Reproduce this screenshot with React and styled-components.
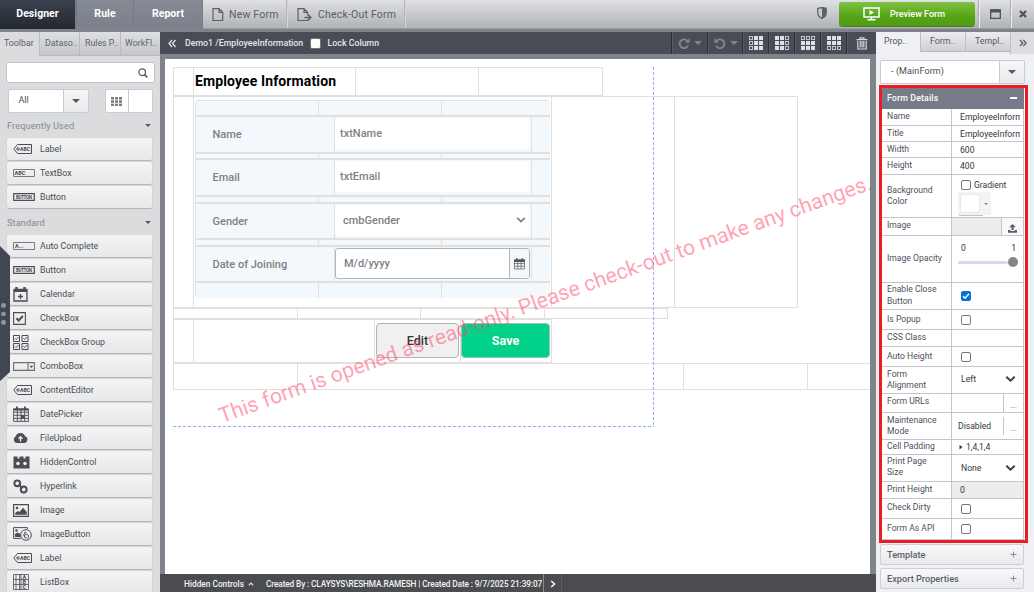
import React from "react";
import styled, { createGlobalStyle, css } from "styled-components";

const GlobalStyle = createGlobalStyle`
  * { box-sizing: border-box; }
  html, body { margin: 0; padding: 0; }
  body {
    width: 1034px;
    height: 592px;
    overflow: hidden;
    background: #7f838b;
    font-family: Roboto, "Liberation Sans", sans-serif;
    font-size: 9px;
    color: #4a4d55;
  }
`;

const line = "#e0e0e0";

/* ---------- page shell ---------- */

const Page = styled.div`
  position: relative;
  display: flex;
  flex-direction: column;
  gap: 3px;
  width: 1034px;
  height: 592px;
  overflow: hidden;
`;

const Header = styled.header`
  display: flex;
  flex: none;
  height: 29px;
  background: linear-gradient(#e0e1e4, #b1b2b6);
  border-bottom: 1px solid #9a9ca1;
`;

const MainTab = styled.div`
  width: ${(p) => p.$w}px;
  height: 29px;
  line-height: 28px;
  text-align: center;
  color: #fff;
  font-size: 10.5px;
  font-weight: 700;
  letter-spacing: 0.05px;
  border-right: ${(p) => (p.$active ? 2 : 1)}px solid #777a84;
  background: ${(p) =>
    p.$active ? "linear-gradient(#3b424e, #232830)" : "linear-gradient(#868a95, #7c808b)"};
`;

const HeaderAction = styled.div`
  display: flex;
  align-items: center;
  gap: ${(p) => p.$gap}px;
  width: ${(p) => p.$w}px;
  height: 28px;
  padding: 1px 0 0 9px;
  border-right: 1px solid #d5d6d9;
  box-shadow: inset -1px 0 #b3b4b8;
  color: #5a5d65;
  font-size: 10.5px;
  letter-spacing: 0.2px;
  white-space: nowrap;
`;

const HeaderRight = styled.div`
  display: flex;
  margin-left: auto;
  align-items: flex-start;
`;

const Shield = styled.div`
  padding: 7px 12px 0 0;
  svg { display: block; }
`;

const PreviewButton = styled.div`
  display: flex;
  align-items: center;
  gap: 10px;
  width: 136px;
  height: 24px;
  margin: 2px 4px 0 0;
  padding-left: 24px;
  border-radius: 3px;
  background: linear-gradient(#80c142, #55a516 60%, #4f9c14);
  box-shadow: 0 1px 0 #4d7c25;
  color: #fff;
  font-size: 9px;
  font-weight: 500;
  line-height: 22px;
`;

const WindowButton = styled.div`
  display: flex;
  align-items: center;
  justify-content: center;
  width: ${(p) => p.$w}px;
  height: 28px;
  border-left: 1px solid #f0f0f1;
  box-shadow: -1px 0 #a9abaf;
`;

const Body = styled.div`
  display: flex;
  flex: 1;
  min-height: 0;
`;

/* ---------- left toolbox ---------- */

const LeftPanel = styled.aside`
  flex: none;
  width: 160px;
  background: #dbdcde;
  overflow: hidden;
`;

const Tabs = styled.div`
  display: flex;
  height: ${(p) => p.$h}px;
`;

const LeftTab = styled.div`
  width: ${(p) => p.$w}px;
  padding-left: ${(p) => p.$pad}px;
  line-height: 22px;
  white-space: nowrap;
  overflow: hidden;
  font-size: 8.8px;
  color: #5e626b;
  ${(p) =>
    !p.$active &&
    css`
      border-left: 1px solid #b9bbbf;
      border-bottom: 1px solid #b9bbbf;
      background: linear-gradient(#dfe0e2, #c3c5c8);
    `}
`;

const SearchBox = styled.div`
  display: flex;
  align-items: center;
  justify-content: flex-end;
  width: 149px;
  height: 21px;
  margin: 6px 0 6px 5.5px;
  padding-right: 6px;
  border: 1px solid #bfc2c8;
  border-radius: 2px;
  background: #fff;
`;

const Filters = styled.div`
  display: flex;
  height: 24px;
  padding-left: 7.5px;
`;

const Select = styled.div`
  display: flex;
  width: ${(p) => p.$w}px;
  height: 24px;
  border: 1px solid #c9ccd6;
  border-radius: 2px;
  background: #fff;
  line-height: 21px;
`;

const SelectText = styled.div`
  flex: 1;
  padding-left: ${(p) => p.$pad}px;
  letter-spacing: ${(p) => p.$ls || 0}px;
`;

const SelectArrow = styled.div`
  display: flex;
  align-items: center;
  justify-content: center;
  width: 25px;
  border-left: 1px solid #c9ccd6;
  background: linear-gradient(#f6f6f7, #e9eaec);
`;

const Caret = styled.i`
  width: 0;
  height: 0;
  border: ${(p) => p.$s || 4}px solid transparent;
  border-top-color: ${(p) => p.$c || "#555962"};
  border-bottom: 0;
`;

const ViewToggle = styled.div`
  display: flex;
  width: 48px;
  height: 24px;
  margin-left: 16px;
  border: 1px solid #c9ccd6;
  border-radius: 2px;
  background: #fff;
`;

const ViewCell = styled.div`
  display: flex;
  align-items: center;
  justify-content: center;
  flex: 1;
  & + & { border-left: 1px solid #c9ccd6; }
`;

const GroupTitle = styled.div`
  display: flex;
  align-items: center;
  justify-content: space-between;
  height: 25px;
  padding: 0 9px 0 7px;
  color: #868991;
  font-size: 9.2px;
  letter-spacing: 0.1px;
`;

const ToolItem = styled.div`
  display: flex;
  align-items: center;
  width: 145px;
  height: 22px;
  margin: 0 0 2px 7px;
  padding-left: 6px;
  border-radius: 2px;
  background: linear-gradient(#f4f4f4, #e7e8e9);
  box-shadow: 0 1px 1px #b2b4b7, 0 0 1px #bbb;
  color: #4a4d54;
  line-height: 24px;
  font-size: 8.8px;
  svg { flex: none; display: block; }
`;

const ToolIcon = styled.div`
  width: 27px;
`;

const SideHandle = styled.div`
  position: absolute;
  left: 0;
  top: 246px;
  display: flex;
  flex-direction: column;
  align-items: flex-start;
  justify-content: center;
  gap: 3.4px;
  width: 10px;
  height: 135px;
  padding: 1px 0 0 1px;
  background: #414752;
  clip-path: polygon(0 0, 10px 10px, 10px 126px, 0 135px);
`;

const Dot = styled.i`
  width: 4.8px;
  height: 4.8px;
  border-radius: 50%;
  background: #9197a1;
`;

/* ---------- centre ---------- */

const Center = styled.main`
  display: flex;
  flex-direction: column;
  width: 716px;
`;

const FormBar = styled.div`
  display: flex;
  align-items: center;
  flex: none;
  height: 22px;
  padding-left: 8px;
  background: #484c55;
  color: #e4e5e8;
  font-size: 8.8px;
  font-weight: 500;
  line-height: 20px;
  white-space: nowrap;
`;

const FormPath = styled.span`
  width: 124px;
  padding-left: 8px;
  margin-right: 9px;
  letter-spacing: 0;
`;

const FormBarTools = styled.div`
  display: flex;
  height: 22px;
  margin-left: auto;
`;

const BarTool = styled.div`
  display: flex;
  align-items: center;
  justify-content: center;
  gap: 3px;
  width: ${(p) => p.$w}px;
  border-left: 1px solid #2b2f36;
  box-shadow: inset 1px 0 #565a63;
`;

const Canvas = styled.div`
  position: relative;
  flex: none;
  width: 705px;
  height: 515px;
  margin: 5px 0 0 5px;
  padding: 8px 0 0 8px;
  overflow: hidden;
  background: #fff;
`;

const GridRow = styled.div`
  display: flex;
  width: ${(p) => p.$w}px;
  height: ${(p) => p.$h}px;
  border: 1px solid ${line};
  border-right-width: ${(p) => (p.$open ? 0 : 1)}px;
`;

const GridCell = styled.div`
  flex: ${(p) => (p.$w ? "none" : 1)};
  width: ${(p) => p.$w}px;
  min-width: 0;
  & + & { border-left: 1px solid ${line}; }
`;

const FormTitle = styled.div`
  padding-left: 1px;
  color: #000;
  font-size: 14px;
  font-weight: 700;
  line-height: 26px;
  letter-spacing: 0.12px;
  white-space: nowrap;
`;

const FormPanel = styled.div`
  width: 355px;
  height: 198px;
  margin: 3px 0 0 1px;
  border-radius: 4px;
  overflow: hidden;
  background: #f2f8fb;
`;

const PanelRow = styled.div`
  display: flex;
  height: ${(p) => p.$h}px;
  border: 1px solid ${line};
  border-right: 0;
  border-bottom-width: ${(p) => (p.$last ? 0 : 1)}px;
`;

const FieldLabel = styled.div`
  padding: 0 0 0 16.5px;
  color: #827f86;
  font-size: 11px;
  font-weight: 500;
  line-height: 36px;
  letter-spacing: ${(p) => p.$ls || 0}px;
`;

const Field = styled.div`
  display: flex;
  align-items: center;
  justify-content: space-between;
  width: 195px;
  height: 31px;
  margin-top: 1px;
  padding: 0 4px 1px ${(p) => p.$pad || 5}px;
  border-radius: 3px;
  background: #fff;
  color: #827f86;
  font-size: 11px;
  font-weight: 500;
`;

const DateField = styled(Field)`
  padding: 0 0 0 8px;
  border: 1px solid #b4b4b4;
`;

const DateButton = styled.div`
  display: flex;
  align-items: center;
  justify-content: center;
  width: 20px;
  height: 29px;
  border-left: 1px solid #b4b4b4;
  border-radius: 0 2px 2px 0;
  background: #f2f8fb;
`;

const FormButton = styled.div`
  width: ${(p) => p.$w}px;
  height: 35px;
  margin: 3px 0 0 ${(p) => p.$ml}px;
  border: 1px solid ${(p) => (p.$primary ? "#9fc4b4" : "#b4b4b4")};
  border-radius: 4px;
  background: ${(p) => (p.$primary ? "#02d189" : "#f0f0f0")};
  color: ${(p) => (p.$primary ? "#fff" : "#333")};
  font-size: 12.5px;
  font-weight: ${(p) => (p.$primary ? 700 : 500)};
  line-height: 34px;
  text-align: center;
`;

const FormBounds = styled.div`
  position: absolute;
  left: 8px;
  top: 8px;
  width: 481px;
  height: 360px;
  background:
    repeating-linear-gradient(90deg, #8db2f5 0 3px, transparent 3px 5px) 0 100% / 100% 1px no-repeat,
    repeating-linear-gradient(#8db2f5 0 3px, transparent 3px 5px) 100% 0 / 1px 100% no-repeat;
`;

const Watermark = styled.div`
  position: absolute;
  left: 58px;
  top: 343px;
  color: rgba(255, 70, 105, 0.5);
  font-size: 21.3px;
  line-height: 28px;
  white-space: nowrap;
  transform-origin: 0 24px;
  transform: rotate(-19.8deg);
`;

const Footer = styled.footer`
  display: flex;
  flex: 1;
  align-items: stretch;
  padding-left: 24px;
  background: #4b4c50;
  color: #f3f3f3;
  font-size: 8.3px;
  font-weight: 500;
  line-height: 19px;
  white-space: nowrap;
`;

const HiddenControls = styled.div`
  display: flex;
  align-items: center;
  gap: 4px;
  width: 82px;
`;

const CreatedBy = styled.div`
  width: 278px;
  line-height: 20px;
  letter-spacing: -0.13px;
  border-right: 1px solid #8a8b8f;
`;

const FooterNext = styled.div`
  display: flex;
  align-items: center;
  justify-content: center;
  width: 18px;
  border-right: 1px solid #5b5c60;
`;

/* ---------- right properties ---------- */

const RightPanel = styled.aside`
  width: 158px;
  background: #eff0f4;
  overflow: hidden;
`;

const RightTab = styled.div`
  width: ${(p) => p.$w}px;
  height: ${(p) => (p.$active ? 21 : 20)}px;
  padding-left: ${(p) => p.$pad}px;
  color: #555860;
  font-size: 8.8px;
  line-height: 18px;
  ${(p) =>
    !p.$active &&
    css`
      border-left: 1px solid #bdbfc4;
      border-bottom: 1px solid #b3b5ba;
      background: linear-gradient(#ececee, #cfd0d4);
    `}
`;

const MoreTabs = styled.div`
  display: flex;
  align-items: center;
  justify-content: center;
  width: 24px;
  height: 22px;
  background: #dcdde0;
  border-left: 1px solid #bdbfc4;
`;

const FormSelectWrap = styled.div`
  padding: 6px 0 0 4px;
`;

const Highlight = styled.section`
  width: 149px;
  height: 458px;
  margin: 1px 0 0 3px;
  border: 3px solid #ec1c24;
  background: #fff;
`;

const DetailsHeader = styled.div`
  display: flex;
  align-items: center;
  justify-content: space-between;
  height: 21px;
  width: 142px;
  padding: 0 7px 1px 5px;
  background: #757b88;
  color: #fff;
  font-size: 8.8px;
  font-weight: 500;
  letter-spacing: 0.12px;
`;

const MinusMark = styled.i`
  width: 7px;
  height: 2px;
  background: #fff;
`;

const PropRow = styled.div`
  display: flex;
  width: 142px;
  height: ${(p) => p.$h}px;
  border-bottom: 1px solid #c3c6ce;
  border-right: 1px solid #c3c6ce;
`;

const PropName = styled.div`
  display: flex;
  align-items: center;
  width: 69px;
  padding: 0 8px ${(p) => p.$up || 0}px 5px;
  color: #4d515a;
  font-size: 8.6px;
  line-height: 11.3px;
`;

const PropValue = styled.div`
  display: flex;
  position: relative;
  align-items: center;
  flex: 1;
  min-width: 0;
  padding-left: ${(p) => (p.$pad == null ? 8 : p.$pad)}px;
  padding-bottom: ${(p) => p.$up || 0}px;
  border-left: 1px solid #c3c6ce;
  background: ${(p) => (p.$grey ? "#ececec" : "#fff")};
  color: #33363d;
  font-size: 8.6px;
  white-space: nowrap;
  overflow: hidden;
`;

const Clip = styled.span`
  width: 60px;
  overflow: hidden;
`;

const Box = styled.span`
  display: flex;
  align-items: center;
  justify-content: center;
  flex: none;
  width: ${(p) => p.$s || 10}px;
  height: ${(p) => p.$s || 10}px;
  border: 1px solid ${(p) => (p.$on ? "#0a6fd0" : "#767676")};
  border-radius: 2px;
  background: ${(p) => (p.$on ? "#0a74d6" : "#fff")};
`;

const Between = styled.div`
  display: flex;
  align-items: center;
  justify-content: space-between;
  flex: 1;
  padding-right: ${(p) => p.$r}px;
`;

const Stack = styled.div`
  display: flex;
  flex-direction: column;
  flex: 1;
  align-self: stretch;
`;

const GradientLine = styled.div`
  display: flex;
  align-items: center;
  gap: 3px;
  height: 17px;
  padding: 2px 0 0 1px;
`;

const Swatch = styled.div`
  display: flex;
  align-items: center;
  justify-content: space-between;
  width: 33px;
  height: 23px;
  margin-left: -2px;
  padding: 0 3px 0 2px;
  background: #f3f3f3;
`;

const SwatchColor = styled.div`
  width: 20px;
  height: 19px;
  border: 1px solid #e8e8e8;
  border-radius: 2px;
  background: #fff;
`;

const SwatchEdge = styled.div`
  width: 24px;
  height: 1px;
  margin-left: -1px;
  background: #bfc2d0;
`;

const SideButton = styled.div`
  display: flex;
  align-items: center;
  justify-content: center;
  width: ${(p) => p.$w}px;
  height: ${(p) => (p.$h ? p.$h + "px" : "100%")};
  margin-left: auto;
  border-left: 1px solid #c3c6ce;
  background: ${(p) => p.$bg || "#fff"};
  color: #77666a;
  line-height: ${(p) => (p.$h ? 17 : 18)}px;
  padding-top: 4px;
`;

const Scale = styled.div`
  display: flex;
  justify-content: space-between;
  padding: 7px 7px 0 1px;
`;

const Slider = styled.div`
  display: flex;
  align-items: center;
  margin: 4px 5px 0 -2px;
`;

const SliderTrack = styled.i`
  flex: 1;
  height: 3px;
  border-radius: 2px;
  background: #d4daee;
`;

const SliderThumb = styled.i`
  width: 10px;
  height: 10px;
  border-radius: 50%;
  background: #858585;
`;

const Accordion = styled.div`
  display: flex;
  align-items: center;
  justify-content: space-between;
  width: 144px;
  height: 21px;
  margin: 1px 0 3px 4px;
  padding: 0 6px 1px 6px;
  border: 1px solid #ccd0d8;
  border-radius: 2px;
  background: linear-gradient(#f8f8f9, #e9eaec);
  color: #5b5f68;
  font-size: 9.2px;
  font-weight: 500;
`;

/* ---------- icons ---------- */

const ink = "#4a4d54";

const Icon = ({ w, h, children, ...rest }) => (
  <svg width={w} height={h} viewBox={`0 0 ${w} ${h}`} fill="none" stroke={ink} {...rest}>
    {children}
  </svg>
);

const iconText = { fill: ink, stroke: "none", fontFamily: "Roboto, sans-serif", fontWeight: 700 };

const icons = {
  tag: (
    <Icon w={20} h={10}>
      <path d="M4.5 .5H18.500V9.500H4.500L.8 5Z" />
      <circle cx="5" cy="5" r="1.200" />
      <text x="7" y="7" fontSize="5.200" {...iconText}>ABC</text>
    </Icon>
  ),
  textbox: (
    <Icon w={22} h={8}>
      <path d="M.5 .5H21.500V7.500H.5Z" stroke="#777a80" />
      <text x="1.500" y="6" fontSize="5.500" {...iconText}>ABC</text>
    </Icon>
  ),
  button: (
    <Icon w={22} h={8}>
      <path d="M.7 .7H21.300V7.300H.7Z" strokeWidth="1.200" />
      <text x="3" y="5.800" fontSize="4.600" textLength="16" {...iconText}>BUTTON</text>
    </Icon>
  ),
  auto: (
    <Icon w={22} h={8}>
      <path d="M.5 .5H21.500V7.500H.5Z" stroke="#777a80" />
      <text x="2" y="6" fontSize="5.500" {...iconText}>A...</text>
    </Icon>
  ),
  calendar: (
    <Icon w={15} h={16}>
      <path d="M1 3.500H14V15H1Z" strokeWidth="1.300" />
      <path d="M1 3H14V6H1Z" fill={ink} stroke="none" />
      <path d="M3.500 1V4.500M11.500 1V4.500" strokeWidth="2.400" />
      <path d="M7.500 8V13M5 10.500H10" strokeWidth="1.300" />
    </Icon>
  ),
  check: (
    <Icon w={13} h={13}>
      <path d="M.6 .6H12.400V12.400H.6Z" strokeWidth="1.100" />
      <path d="M3.400 6.300L5.700 8.600L9.800 4" strokeWidth="2" />
    </Icon>
  ),
  checks: (
    <Icon w={16} h={15}>
      {[0, 8.5].map((x) =>
        [0, 8].map((y) => (
          <g key={`${x}-${y}`} transform={`translate(${x} ${y})`}>
            <path d="M.5 .5H6.500V6.500H.5Z" />
            <path d="M2 3.300L3.200 4.500L5.400 2.200" />
          </g>
        ))
      )}
    </Icon>
  ),
  combo: (
    <Icon w={22} h={9}>
      <path d="M.6 .6H21.400V8.400H.6ZM15 1V8" strokeWidth="1.100" stroke="#6a6d73" />
      <path d="M16.500 3.700H20.300L18.400 6Z" fill={ink} stroke="none" />
    </Icon>
  ),
  datepicker: (
    <Icon w={16} h={16}>
      <path d="M.6 3H15.400V15.400H.6ZM.6 6.200H15.400M.6 9.300H15.400M.6 12.400H15.400M4.300 3V15.400M8 3V15.400M11.700 3V15.400" strokeWidth=".9" />
      <path d="M.5 2.500H15.500V4.500H.5ZM8 9.300H11.700V12.400H8ZM3 .5H4.800V4H3ZM11 .5H12.800V4H11Z" fill={ink} stroke="none" />
    </Icon>
  ),
  upload: (
    <Icon w={15} h={12}>
      <path d="M3.800 11A3.500 3.500 0 0 1 2.600 4.500A5 5 0 0 1 12 4.200A3.500 3.500 0 0 1 11.500 11Z" fill={ink} stroke="none" />
      <path d="M7.500 9.500V5M5.500 6.700L7.500 4.700L9.500 6.700" stroke="#efefef" strokeWidth="1.300" />
    </Icon>
  ),
  hidden: (
    <Icon w={17} h={13}>
      <path d="M.5 .5H4.500V2.500H6.500V.5H10.500V2.500H12.500V.5H16.500V12.500H.5Z" fill={ink} stroke="none" />
      <circle cx="5" cy="7.500" r="1.800" fill="#eee" stroke="none" />
      <circle cx="12" cy="7.500" r="1.800" fill="#eee" stroke="none" />
    </Icon>
  ),
  link: (
    <Icon w={15} h={15}>
      <circle cx="4.300" cy="4.300" r="2.900" strokeWidth="2" />
      <circle cx="10.700" cy="10.500" r="2.900" strokeWidth="2" />
      <path d="M5.500 5.400L9.500 9.400" strokeWidth="1.800" />
    </Icon>
  ),
  image: (
    <Icon w={16} h={13}>
      <path d="M.6 .6H15.400V12.400H.6Z" strokeWidth="1.200" />
      <circle cx="4" cy="4" r="1.300" fill={ink} stroke="none" />
      <path d="M2.200 10.800V9L5 7L6.500 8L10 3.800L13.800 8V10.800Z" fill={ink} stroke="none" />
    </Icon>
  ),
  imageButton: (
    <Icon w={20} h={14}>
      <path d="M8 11.400H.6V.6H14.400V2" />
      <circle cx="3.500" cy="3.500" r="1.200" fill={ink} stroke="none" />
      <path d="M2 10V7L4.500 5.500L7.500 7V10Z" fill={ink} stroke="none" />
      <circle cx="13" cy="8" r="5.300" fill="#efefef" />
      <path d="M11 8.500L10.500 7.500L11.700 9.800V5.200H12.800V7.500L15.500 8V10L14.800 11H12Z" strokeWidth=".8" />
    </Icon>
  ),
  listbox: (
    <Icon w={16} h={16}>
      <path d="M.5 .5H15.500V15.500H.5ZM6.500 .5V15.500M8 .5V15.500M.5 5.500H15.500M.5 10.500H15.500M3 .5V15.500" strokeWidth=".8" />
      <text x="9.400" y="5.200" fontSize="5.500" {...iconText}>A</text>
      <text x="9.400" y="10.200" fontSize="5.500" {...iconText}>B</text>
      <text x="9.400" y="15.200" fontSize="5.500" {...iconText}>C</text>
    </Icon>
  ),
};

const PageIcon = ({ arrow }) => (
  <Icon w={arrow ? 16 : 12} h={14} stroke="#5d6068">
    <path d="M7 .7H1V12.500H10.700V4.300L7 .7V4.300H10.700" strokeWidth="1.200" />
    {arrow && (
      <>
        <path d="M8 9.500H14" stroke="#c6c7ca" strokeWidth="4.500" />
        <path d="M7.500 9.500H13M11 6.700L13.800 9.500L11 12.300" strokeWidth="1.600" />
      </>
    )}
  </Icon>
);

/* 3x3 layout glyph; `hollow` tells which squares are only outlined */
const GridGlyph = ({ hollow }) => (
  <svg width="14" height="14" viewBox="0 0 14 14">
    {[0, 1, 2].map((r) =>
      [0, 1, 2].map((c) => {
        const open = hollow(r, c);
        return (
          <rect
            key={`${r}${c}`}
            x={c * 5 + (open ? 0.5 : 0)}
            y={r * 5 + (open ? 0.5 : 0)}
            width={open ? 3 : 4}
            height={open ? 3 : 4}
            fill={open ? "none" : "#dfe0e3"}
            stroke={open ? "#c3c5ca" : "none"}
          />
        );
      })
    )}
  </svg>
);

const Turn = ({ flip }) => (
  <svg width="14" height="14" viewBox="0 0 14 14" fill="none" stroke="#82858b" strokeWidth="1.900">
    <g transform={flip ? "matrix(-1 0 0 1 14 0)" : undefined}>
      <path d="M10.500 5A4.400 4.400 0 1 0 11 9.700" />
      <path d="M12.600 2V6.700H7.900Z" fill="#82858b" stroke="none" />
    </g>
  </svg>
);

const Chevron = ({ color = "#3d3f45", w = 11 }) => (
  <svg width={w} height="8" viewBox="0 0 11 8" fill="none" stroke={color} strokeWidth="2">
    <path d="M1.300 1.700L5.500 5.700L9.700 1.700" />
  </svg>
);

/* ---------- data ---------- */

const frequent = [
  ["tag", "Label"],
  ["textbox", "TextBox"],
  ["button", "Button"],
];

const standard = [
  ["auto", "Auto Complete"],
  ["button", "Button"],
  ["calendar", "Calendar"],
  ["check", "CheckBox"],
  ["checks", "CheckBox Group"],
  ["combo", "ComboBox"],
  ["tag", "ContentEditor"],
  ["datepicker", "DatePicker"],
  ["upload", "FileUpload"],
  ["hidden", "HiddenControl"],
  ["link", "Hyperlink"],
  ["image", "Image"],
  ["imageButton", "ImageButton"],
  ["tag", "Label"],
  ["listbox", "ListBox"],
];

const Tool = ({ icon, name }) => (
  <ToolItem>
    <ToolIcon>{icons[icon]}</ToolIcon>
    {name}
  </ToolItem>
);

const Prop = ({ h, name, up, children, ...value }) => (
  <PropRow $h={h}>
    <PropName $up={up}>{name}</PropName>
    <PropValue {...value}>{children}</PropValue>
  </PropRow>
);

const FieldRow = ({ h, label, children }) => (
  <PanelRow $h={h}>
    <GridCell $w={138}>
      <FieldLabel>{label}</FieldLabel>
    </GridCell>
    <GridCell $w={197}>{children}</GridCell>
    <GridCell />
  </PanelRow>
);

const SpacerRow = ({ h, last }) => (
  <PanelRow $h={h} $last={last}>
    <GridCell $w={122} />
    <GridCell $w={123} />
    <GridCell />
  </PanelRow>
);

export default function App() {
  return (
    <>
      <GlobalStyle />
      <Page>
        <Header>
          <MainTab $w={77} $active>Designer</MainTab>
          <MainTab $w={57}>Rule</MainTab>
          <MainTab $w={69}>Report</MainTab>
          <HeaderAction $w={85} $gap={5}>
            <PageIcon /> New Form
          </HeaderAction>
          <HeaderAction $w={118} $gap={5}>
            <PageIcon arrow /> Check-Out Form
          </HeaderAction>
          <HeaderRight>
            <Shield>
              <svg width="10" height="12" viewBox="0 0 10 12">
                <path d="M.8 1.300L5 .5L9.200 1.300V6C9.200 8.500 7.500 10.300 5 11.400C2.500 10.300.8 8.500.8 6Z" fill="#c9cacd" stroke="#5a6270" strokeWidth="1.300" />
                <path d="M5 .5L9.200 1.300V6C9.200 8.500 7.500 10.300 5 11.400Z" fill="#5a6270" />
              </svg>
            </Shield>
            <PreviewButton>
              <svg width="17" height="14" viewBox="0 0 17 14" fill="none" stroke="#fff">
                <path d="M1 1H16V10H1Z" strokeWidth="1.500" />
                <path d="M6.500 3V8L11 5.500Z" fill="#fff" stroke="none" />
                <path d="M8.500 10V12M4.500 12.700H12.500" strokeWidth="1.500" />
              </svg>
              Preview Form
            </PreviewButton>
            <WindowButton $w={32}>
              <svg width="11" height="10" viewBox="0 0 11 10" fill="none" stroke="#4d525e">
                <path d="M.7 1H10.300V9.300H.7Z" strokeWidth="1.300" />
                <path d="M0 2H11" strokeWidth="3" />
              </svg>
            </WindowButton>
            <WindowButton $w={23}>
              <svg width="8" height="8" viewBox="0 0 8 8" stroke="#4d525e" strokeWidth="2.300">
                <path d="M1 1L7 7M7 1L1 7" />
              </svg>
            </WindowButton>
          </HeaderRight>
        </Header>

        <Body>
          <LeftPanel>
            <Tabs $h={24}>
              <LeftTab $w={39} $pad={4} $active>Toolbar</LeftTab>
              <LeftTab $w={40} $pad={5}>Dataso..</LeftTab>
              <LeftTab $w={41} $pad={5}>Rules P..</LeftTab>
              <LeftTab $w={40} $pad={4}>WorkFl..</LeftTab>
            </Tabs>
            <SearchBox>
              <svg width="10" height="10" viewBox="0 0 10 10" fill="none" stroke="#5a5e68">
                <circle cx="4.200" cy="4.200" r="3.300" strokeWidth="1.300" />
                <path d="M6.600 6.600L9.300 9.300" strokeWidth="1.800" />
              </svg>
            </SearchBox>
            <Filters>
              <Select $w={81}>
                <SelectText $pad={10}>All</SelectText>
                <SelectArrow><Caret /></SelectArrow>
              </Select>
              <ViewToggle>
                <ViewCell>
                  <svg width="11" height="9" viewBox="0 0 11 9" fill="#7a7d84">
                    {[0, 4, 8].map((x) =>
                      [0, 3.3, 6.6].map((y) => (
                        <rect key={`${x}-${y}`} x={x} y={y} width="3" height="2.500" />
                      ))
                    )}
                  </svg>
                </ViewCell>
                <ViewCell />
              </ViewToggle>
            </Filters>
            <GroupTitle>Frequently Used <Caret $s={3.5} /></GroupTitle>
            {frequent.map(([icon, name]) => (
              <Tool key={name} icon={icon} name={name} />
            ))}
            <GroupTitle>Standard <Caret $s={3.5} /></GroupTitle>
            {standard.map(([icon, name]) => (
              <Tool key={name} icon={icon} name={name} />
            ))}
          </LeftPanel>

          <Center>
            <FormBar>
              <svg width="9" height="9" viewBox="0 0 9 9" fill="none" stroke="#e4e5e8" strokeWidth="1.300">
                <path d="M4 1L1 4.500L4 8M7.500 1L4.500 4.500L7.500 8" />
              </svg>
              <FormPath>Demo1 /EmployeeInformation</FormPath>
              <Box $s={11} />
              <span>&nbsp;&nbsp;&nbsp;Lock Column</span>
              <FormBarTools>
                <BarTool $w={36}><Turn /><Caret $c="#82858b" /></BarTool>
                <BarTool $w={35}><Turn flip /><Caret $c="#82858b" /></BarTool>
                <BarTool $w={26}><GridGlyph hollow={(r, c) => c === 0} /></BarTool>
                <BarTool $w={26}><GridGlyph hollow={(r, c) => c === 2} /></BarTool>
                <BarTool $w={26}><GridGlyph hollow={(r) => r === 0} /></BarTool>
                <BarTool $w={26}><GridGlyph hollow={(r) => r === 2} /></BarTool>
                <BarTool $w={30}>
                  <svg width="12" height="13" viewBox="0 0 12 13" fill="none" stroke="#d6d8dc" strokeWidth="1.200">
                    <path d="M.5 2.600H11.500M4 2.600V.8H8V2.600M1.800 4V12H10.200V4M4.200 4V10.500M6 4V10.500M7.800 4V10.500" />
                  </svg>
                </BarTool>
              </FormBarTools>
            </FormBar>

            <Canvas>
              <GridRow $w={430} $h={29}>
                <GridCell $w={19} />
                <GridCell $w={162}><FormTitle>Employee Information</FormTitle></GridCell>
                <GridCell $w={123} />
                <GridCell />
              </GridRow>
              <GridRow $w={625} $h={212}>
                <GridCell $w={19} />
                <GridCell $w={358}>
                  <FormPanel>
                    <SpacerRow h={16} />
                    <FieldRow h={37} label="Name"><Field>txtName</Field></FieldRow>
                    <SpacerRow h={6} />
                    <FieldRow h={37} label="Email"><Field>txtEmail</Field></FieldRow>
                    <SpacerRow h={7} />
                    <FieldRow h={36} label="Gender">
                      <Field $pad={8}>cmbGender <Chevron color="#7f7c82" w={10} /></Field>
                    </FieldRow>
                    <SpacerRow h={7} />
                    <FieldRow h={36} label="Date of Joining">
                      <DateField>
                        M/d/yyyy
                        <DateButton>
                          <svg width="11" height="12" viewBox="0 0 11 12" fill="none" stroke="#6b6b6b">
                            <path d="M.5 2H10.500V11H.5ZM.5 5.500H10.500M.5 8.200H10.500M3.800 4V11M7.100 4V11" strokeWidth=".8" />
                            <path d="M0 1.500H11V4H0ZM2 .3H3.500V2H2ZM7.500 .3H9V2H7.500Z" fill="#555" stroke="none" />
                          </svg>
                        </DateButton>
                      </DateField>
                    </FieldRow>
                    <SpacerRow h={16} last />
                  </FormPanel>
                </GridCell>
                <GridCell $w={123} />
                <GridCell />
              </GridRow>
              <GridRow $w={495} $h={11}>
                <GridCell $w={123} />
                <GridCell $w={123} />
                <GridCell $w={124} />
                <GridCell />
              </GridRow>
              <GridRow $w={379} $h={44}>
                <GridCell $w={19} />
                <GridCell $w={181} />
                <GridCell $w={86}><FormButton $w={83} $ml={1}>Edit</FormButton></GridCell>
                <GridCell><FormButton $w={89} $ml={0} $primary>Save</FormButton></GridCell>
              </GridRow>
              <GridRow $w={697} $h={27} $open>
                <GridCell $w={123} />
                <GridCell $w={386} />
                <GridCell $w={124} />
                <GridCell />
              </GridRow>
              <FormBounds />
              <Watermark>
                This form is opened as read-only. Please check-out to make any changes.
              </Watermark>
            </Canvas>

            <Footer>
              <HiddenControls>
                Hidden Controls
                <svg width="6" height="4" viewBox="0 0 6 4" fill="none" stroke="#eee" strokeWidth="1.100">
                  <path d="M.8 3.300L3 1L5.200 3.300" />
                </svg>
              </HiddenControls>
              <CreatedBy>Created By : CLAYSYS\RESHMA.RAMESH | Created Date : 9/7/2025 21:39:07</CreatedBy>
              <FooterNext>
                <svg width="6" height="8" viewBox="0 0 6 8" fill="none" stroke="#fff" strokeWidth="1.500">
                  <path d="M1.200 1L4.500 4L1.200 7" />
                </svg>
              </FooterNext>
            </Footer>
          </Center>

          <RightPanel>
            <Tabs $h={22}>
              <RightTab $w={44} $pad={8} $active>Prop..</RightTab>
              <RightTab $w={45} $pad={9}>Form..</RightTab>
              <RightTab $w={45} $pad={9}>Templ..</RightTab>
              <MoreTabs>
                <svg width="8" height="8" viewBox="0 0 8 8" fill="none" stroke="#555962" strokeWidth="1.200">
                  <path d="M1 1L3.800 4L1 7M4.300 1L7.100 4L4.300 7" />
                </svg>
              </MoreTabs>
            </Tabs>
            <FormSelectWrap>
              <Select $w={145}>
                <SelectText $pad={10} $ls={0.1}>- (MainForm)</SelectText>
                <SelectArrow><Caret /></SelectArrow>
              </Select>
            </FormSelectWrap>
            <Highlight>
              <DetailsHeader>Form Details <MinusMark /></DetailsHeader>
              <Prop h={17} name="Name"><Clip>EmployeeInformation</Clip></Prop>
              <Prop h={16} name="Title"><Clip>EmployeeInformation</Clip></Prop>
              <Prop h={16} name="Width">600</Prop>
              <Prop h={17} name="Height">400</Prop>
              <Prop h={43} name="Background Color">
                <Stack>
                  <GradientLine><Box /> Gradient</GradientLine>
                  <Swatch><SwatchColor /><Caret $s={2.5} $c="#888" /></Swatch>
                  <SwatchEdge />
                </Stack>
              </Prop>
              <Prop h={18} name="Image" up={2} $grey>
                <SideButton $w={22} $bg="#f8f8f8">
                  <svg width="9" height="9" viewBox="0 0 9 9" fill="#5d6068">
                    <path d="M4.500 0L7.800 3.300H5.600V6H3.400V3.300H1.200ZM0 6H2.500V7H6.500V6H9V8.800H0Z" />
                  </svg>
                </SideButton>
              </Prop>
              <Prop h={47} name="Image Opacity">
                <Stack>
                  <Scale><span>0</span><span>1</span></Scale>
                  <Slider><SliderTrack /><SliderThumb /></Slider>
                </Stack>
              </Prop>
              <Prop h={27} name="Enable Close Button" up={1} $pad={9}>
                <Box $on>
                  <svg width="8" height="8" viewBox="0 0 8 8" fill="none" stroke="#fff" strokeWidth="1.500">
                    <path d="M1 4.200L3 6.200L7 1.700" />
                  </svg>
                </Box>
              </Prop>
              <Prop h={20} name="Is Popup" $pad={9}><Box /></Prop>
              <Prop h={17} name="CSS Class" />
              <Prop h={20} name="Auto Height" $pad={9}><Box /></Prop>
              <Prop h={27} name="Form Alignment" $pad={9} $up={2}>
                <Between $r={7}>Left <Chevron /></Between>
              </Prop>
              <Prop h={19} name="Form URLs" up={2}>
                <SideButton $w={20}>...</SideButton>
              </Prop>
              <Prop h={27} name="Maintenance Mode" $pad={6}>
                <span>Disabled</span>
                <SideButton $w={20} $h={18}>...</SideButton>
              </Prop>
              <Prop h={15} name="Cell Padding" up={1} $pad={7}>
                <svg width="7" height="6" viewBox="0 0 7 6" fill="#33363d"><path d="M.5 1L3.500 3L.5 5.500Z" /></svg>
                1,4,1,4
              </Prop>
              <Prop h={27} name="Print Page Size" up={2} $pad={9} $up={1}>
                <Between $r={7}>None <Chevron /></Between>
              </Prop>
              <Prop h={17} name="Print Height" up={1} $grey>0</Prop>
              <Prop h={20} name="Check Dirty" up={1} $pad={9}><Box /></Prop>
              <Prop h={21} name="Form As API" up={1} $pad={9}><Box /></Prop>
            </Highlight>
            <Accordion>
              Template
              <svg width="7" height="7" viewBox="0 0 7 7" stroke="#8b8e96"><path d="M3.500 .5V6.500M.5 3.500H6.500" /></svg>
            </Accordion>
            <Accordion>
              Export Properties
              <svg width="7" height="7" viewBox="0 0 7 7" stroke="#8b8e96"><path d="M3.500 .5V6.500M.5 3.500H6.500" /></svg>
            </Accordion>
            <Accordion />
          </RightPanel>
        </Body>

        <SideHandle><Dot /><Dot /><Dot /></SideHandle>
      </Page>
    </>
  );
}
